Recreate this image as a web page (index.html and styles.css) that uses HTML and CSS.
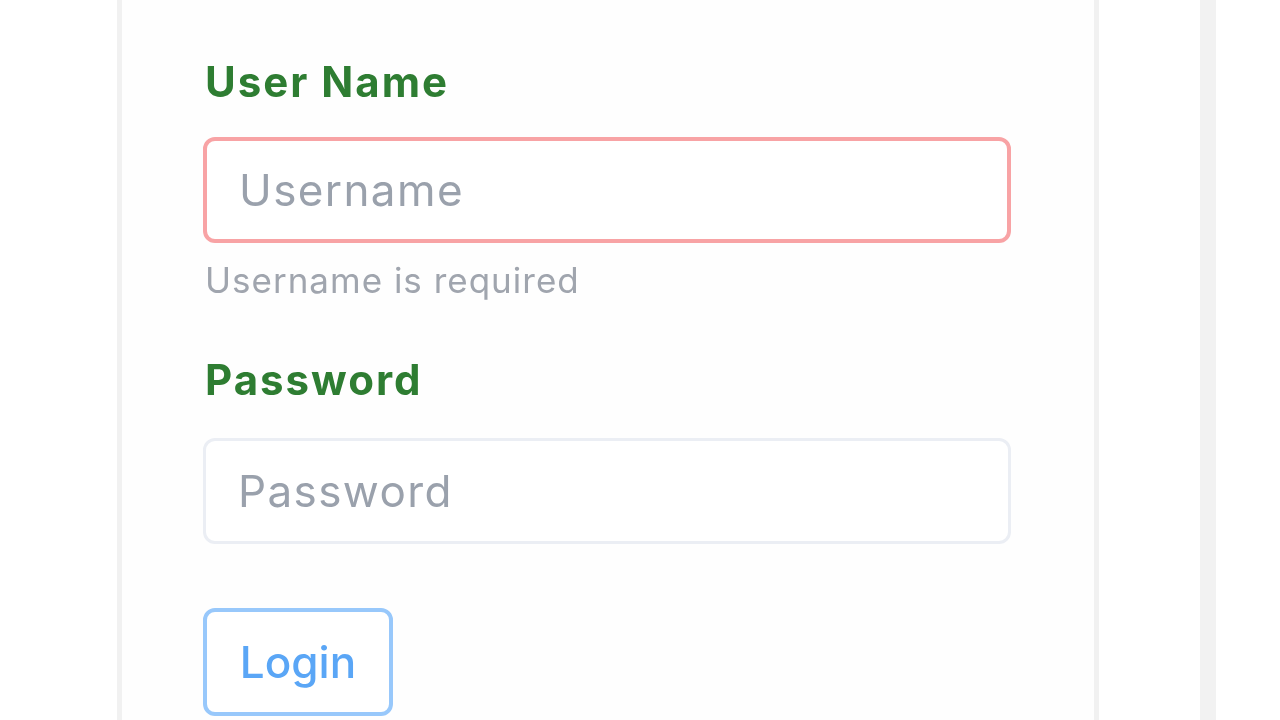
FILE: index.html
```html
<!DOCTYPE html>
<html>
<head>
    <meta charset="utf-8">
    <title>Login</title>
    <link rel="stylesheet" href="styles.css">
</head>
<body>
<div class="page">
    <div class="card">
        <form class="login-form">
            <label class="field-label" for="username">User Name</label>
            <input class="field-input invalid" id="username" type="text" placeholder="Username">
            <div class="field-help">Username is required</div>

            <label class="field-label second" for="password">Password</label>
            <input class="field-input" id="password" type="password" placeholder="Password">

            <button class="login-btn" type="button">Login</button>
        </form>
    </div>
    <div class="side-strip"></div>
</div>
</body>
</html>
```

FILE: styles.css
```css
@charset "utf-8";
body {
    margin: 0px;
    padding: 0px;
    background: white;
    font-family: 'Inter', 'Open Sans', sans-serif;
    overflow: hidden;
}
.page {
    display: flex;
    height: 720px;
    padding-left: 117px;
    filter: blur(0.6px);
}
.card {
    width: 972px;
    border-left: 5px solid #f1f1f1;
    border-right: 5px solid #f1f1f1;
    background: #fefefe;
}
.side-strip {
    width: 16px;
    margin-left: 101px;
    background: #f2f2f2;
}
.login-form {
    display: flex;
    flex-direction: column;
    align-items: flex-start;
    padding: 58px 0px 0px 81px;
}
.field-label {
    padding-left: 2px;
    font-size: 42px;
    line-height: 48px;
    font-weight: 700;
    color: #2e7d32;
    letter-spacing: 2px;
}
.field-label.second {
    margin-top: 56px;
}
.field-input {
    box-sizing: border-box;
    width: 808px;
    height: 106px;
    margin-top: 31px;
    padding: 0px 32px;
    border: 3px solid #ebeef4;
    border-radius: 12px;
    background: white;
    font-family: inherit;
    font-size: 44px;
    letter-spacing: 1.4px;
    color: #333;
    outline: none;
}
.field-input::placeholder {
    color: #9aa1ac;
}
.field-input.invalid {
    border: 4px solid #f8a3a5;
}
#password {
    margin-top: 34px;
}
.field-help {
    margin-top: 17px;
    padding-left: 2px;
    font-size: 35px;
    line-height: 40px;
    letter-spacing: 1px;
    color: #a0a5ae;
}
.login-btn {
    box-sizing: border-box;
    width: 190px;
    height: 108px;
    margin-top: 64px;
    border: 4px solid #98c8fb;
    border-radius: 12px;
    background: white;
    font-family: inherit;
    font-size: 44px;
    font-weight: 500;
    color: #5aa6f6;
    padding: 0px;
}
```
